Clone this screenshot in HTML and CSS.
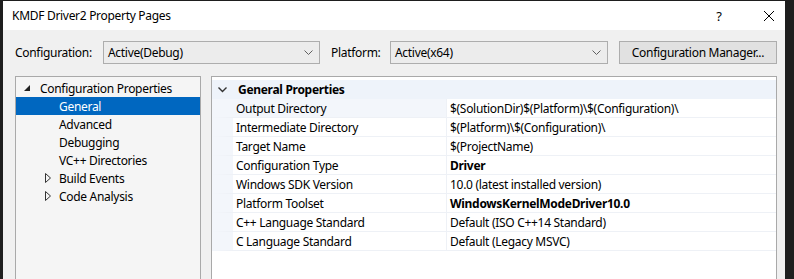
FILE: index.html
```html
<!DOCTYPE html>
<html lang="en">

<head>
    <meta charset="UTF-8">
    <meta name="viewport" content="width=device-width, initial-scale=1.0">
    <title>KMDF Driver2 Property Pages</title>
    <link rel="stylesheet" href="styles.css">
</head>

<body>
    <div class="window">
        <div class="titlebar">
            <div class="caption">KMDF Driver2 Property Pages</div>
            <div class="help">?</div>
            <div class="close">
                <svg width="12" height="12" viewBox="0 0 12 12">
                    <path d="M1 1 L11 11 M11 1 L1 11" stroke="#000" stroke-width="1" fill="none" />
                </svg>
            </div>
        </div>

        <div class="toolbar">
            <span class="label">Configuration:</span>
            <div class="combo combo-config">
                <span>Active(Debug)</span>
                <svg class="chev" width="9" height="5" viewBox="0 0 9 5">
                    <path d="M0.5 0.5 L4.5 4.5 L8.5 0.5" stroke="#606060" fill="none" />
                </svg>
            </div>
            <span class="label label-platform">Platform:</span>
            <div class="combo combo-platform">
                <span>Active(x64)</span>
                <svg class="chev" width="9" height="5" viewBox="0 0 9 5">
                    <path d="M0.5 0.5 L4.5 4.5 L8.5 0.5" stroke="#606060" fill="none" />
                </svg>
            </div>
            <div class="btn">Configuration Manager...</div>
        </div>

        <div class="main">
            <div class="tree">
                <div class="node root">
                    <svg class="arrow" width="7" height="7" viewBox="0 0 7 7">
                        <path d="M6 0 L6 6 L0 6 Z" fill="#222" />
                    </svg>
                    Configuration Properties
                </div>
                <div class="node child selected">General</div>
                <div class="node child">Advanced</div>
                <div class="node child">Debugging</div>
                <div class="node child">VC++ Directories</div>
                <div class="node child">
                    <svg class="arrow-open" width="6" height="10" viewBox="0 0 6 10">
                        <path d="M0.5 0.5 L5.5 5 L0.5 9.5 Z" fill="none" stroke="#333" />
                    </svg>
                    Build Events
                </div>
                <div class="node child">
                    <svg class="arrow-open" width="6" height="10" viewBox="0 0 6 10">
                        <path d="M0.5 0.5 L5.5 5 L0.5 9.5 Z" fill="none" stroke="#333" />
                    </svg>
                    Code Analysis
                </div>
            </div>

            <div class="grid">
                <div class="section">
                    <svg class="sec-chev" width="9" height="6" viewBox="0 0 9 6">
                        <path d="M0.5 0.5 L4.5 4.5 L8.5 0.5" stroke="#333" stroke-width="1.4" fill="none" />
                    </svg>
                    General Properties
                </div>
                <div class="row first">
                    <div class="name">Output Directory</div>
                    <div class="value">$(SolutionDir)$(Platform)\$(Configuration)\</div>
                </div>
                <div class="row">
                    <div class="name">Intermediate Directory</div>
                    <div class="value">$(Platform)\$(Configuration)\</div>
                </div>
                <div class="row">
                    <div class="name">Target Name</div>
                    <div class="value">$(ProjectName)</div>
                </div>
                <div class="row">
                    <div class="name">Configuration Type</div>
                    <div class="value bold">Driver</div>
                </div>
                <div class="row">
                    <div class="name">Windows SDK Version</div>
                    <div class="value">10.0 (latest installed version)</div>
                </div>
                <div class="row">
                    <div class="name">Platform Toolset</div>
                    <div class="value bold">WindowsKernelModeDriver10.0</div>
                </div>
                <div class="row">
                    <div class="name">C++ Language Standard</div>
                    <div class="value">Default (ISO C++14 Standard)</div>
                </div>
                <div class="row">
                    <div class="name">C Language Standard</div>
                    <div class="value">Default (Legacy MSVC)</div>
                </div>
            </div>
        </div>
    </div>
</body>

</html>
```

FILE: styles.css
```css
* {
    box-sizing: border-box;
}

body {
    margin: 0;
    background-color: #1e1e1e;
    font-family: "Noto Sans", "Open Sans", sans-serif;
    font-size: 12px;
    letter-spacing: -0.3px;
    color: #000;
    overflow: hidden;
}

.window {
    margin: 1px 0 0 3px;
    width: 782px;
    height: 278px;
    background-color: #f0f0f0;
    overflow: hidden;
}

/* title bar */
.titlebar {
    height: 29px;
    background-color: #fff;
    display: flex;
    align-items: center;
    padding-left: 9px;
}

.caption {
    flex: 1;
}

.help {
    width: 20px;
    text-align: center;
    font-size: 13px;
    margin-right: 30px;
}

.close {
    width: 20px;
    display: flex;
    justify-content: center;
    margin-right: 6px;
}

/* configuration row */
.toolbar {
    height: 46px;
    display: flex;
    align-items: center;
    padding-left: 12px;
    padding-bottom: 2px;
}

.label {
    width: 88px;
}

.label-platform {
    width: 59px;
    margin-left: 11px;
}

.combo {
    height: 23px;
    border: 1px solid #adadad;
    background-color: #ececec;
    display: flex;
    align-items: center;
    justify-content: space-between;
    padding: 0 6px 0 4px;
}

.combo-config {
    width: 217px;
}

.combo-platform {
    width: 218px;
}

.btn {
    margin-left: 11px;
    width: 158px;
    height: 23px;
    border: 1px solid #adadad;
    background-color: #e1e1e1;
    display: flex;
    align-items: center;
    justify-content: center;
}

/* tree + grid */
.main {
    display: flex;
    padding-left: 12px;
    gap: 10px;
    height: 203px;
}

.tree {
    width: 186px;
    border: 1px solid #a9a9a9;
    border-bottom: none;
    background-color: #f5f5f5;
    padding-top: 2px;
}

.node {
    height: 18px;
    display: flex;
    align-items: center;
    white-space: nowrap;
}

.root {
    padding-left: 8px;
}

.arrow {
    margin-right: 9px;
}

.child {
    padding-left: 43px;
    position: relative;
}

.selected {
    background-color: #0067c0;
    color: #fff;
}

.arrow-open {
    position: absolute;
    left: 29px;
    top: 4px;
}

.grid {
    width: 566px;
    border: 1px solid #a9a9a9;
    border-bottom: none;
    background-color: #fff;
    padding-top: 3px;
}

.section {
    height: 19px;
    display: flex;
    align-items: center;
    font-weight: bold;
    background-color: #eef3fa;
    padding-left: 6px;
}

.sec-chev {
    margin-right: 11px;
}

.row {
    height: 19px;
    display: flex;
    border-left: 21px solid #f3f6fb;
    border-bottom: 1px solid #eef1f6;
}

.name {
    width: 214px;
    padding-left: 3px;
    border-right: 1px solid #eef1f6;
    display: flex;
    align-items: center;
}

.first .name {
    background-color: #f3f6fb;
}

.value {
    flex: 1;
    padding-left: 3px;
    display: flex;
    align-items: center;
    white-space: nowrap;
}

.bold {
    font-weight: bold;
}
```
